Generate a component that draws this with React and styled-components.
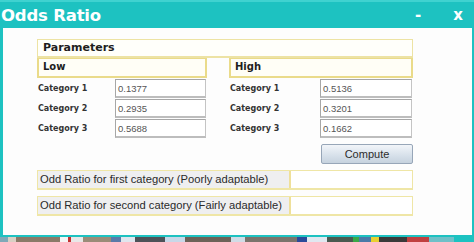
import React from "react";
import styled, { createGlobalStyle } from "styled-components";

const GlobalStyle = createGlobalStyle`
  html, body {
    margin: 0;
    padding: 0;
    background: #1dc2c1;
  }
  #root {
    width: 474px;
    height: 242px;
    overflow: hidden;
  }
`;

const low = [
  { label: "Category 1", value: "0.1377" },
  { label: "Category 2", value: "0.2935" },
  { label: "Category 3", value: "0.5688" },
];

const high = [
  { label: "Category 1", value: "0.5136" },
  { label: "Category 2", value: "0.3201" },
  { label: "Category 3", value: "0.1662" },
];

const results = [
  "Odd Ratio for first category (Poorly adaptable)",
  "Odd Ratio for second category (Fairly adaptable)",
];

const taskbar = [
  ["#7fa9b8", 8],
  ["#d8d0c4", 8],
  ["#8a7a68", 44],
  ["#f4f4f4", 8],
  ["#c23030", 3],
  ["#e8e8e8", 12],
  ["#9a8c78", 28],
  ["#5a7aa8", 10],
  ["#dfe6ee", 14],
  ["#4d5258", 30],
  ["#c8d8e8", 20],
  ["#6c6258", 46],
  ["#d0dce6", 14],
  ["#7a746c", 52],
  ["#2a4a9a", 10],
  ["#e0e8f0", 20],
  ["#4a5a50", 26],
  ["#3aa848", 6],
  ["#4a7aa8", 12],
  ["#e8d030", 8],
  ["#3a3a3a", 28],
  ["#c04040", 22],
  ["#70c0c8", 25],
];

const App = () => {
  return (
    <>
      <GlobalStyle />
      <Window>
        <TitleBar>
          <Title>Odds Ratio</Title>
          <TitleButtons>
            <TitleButton>-</TitleButton>
            <TitleButton>x</TitleButton>
          </TitleButtons>
        </TitleBar>
        <Body>
          <Content>
            <SectionHeader>Parameters</SectionHeader>
            <Columns>
              <Column $width={170} $inputLeft={78}>
                <GroupHeader>Low</GroupHeader>
                {low.map((r) => (
                  <Row key={r.label}>
                    <RowLabel>{r.label}</RowLabel>
                    <Field>{r.value}</Field>
                  </Row>
                ))}
              </Column>
              <Column $width={184} $inputLeft={91}>
                <GroupHeader>High</GroupHeader>
                {high.map((r) => (
                  <Row key={r.label}>
                    <RowLabel>{r.label}</RowLabel>
                    <Field>{r.value}</Field>
                  </Row>
                ))}
              </Column>
            </Columns>
            <Actions>
              <Button>Compute</Button>
            </Actions>
            {results.map((text) => (
              <ResultRow key={text}>
                <ResultLabel>{text}</ResultLabel>
                <ResultValue />
              </ResultRow>
            ))}
          </Content>
        </Body>
        <Taskbar>
          {taskbar.map(([c, w], i) => (
            <Chunk key={i} style={{ background: c, width: w }} />
          ))}
        </Taskbar>
      </Window>
    </>
  );
};

export default App;

const Window = styled.div`
  width: 474px;
  height: 242px;
  display: flex;
  flex-direction: column;
  background: #1dc2c1;
`;

const TitleBar = styled.div`
  height: 28px;
  display: flex;
  align-items: center;
  justify-content: space-between;
  padding: 0 11px 0 1px;
  box-sizing: border-box;
  background: #1dc2c1;
  border-top: 2px solid #3fd2d0;
`;

const Title = styled.div`
  font-family: "DejaVu Sans", Verdana, sans-serif;
  font-weight: bold;
  font-size: 16.5px;
  color: #ffffff;
  letter-spacing: -0.2px;
`;

const TitleButtons = styled.div`
  display: flex;
  gap: 32px;
  align-items: center;
`;

const TitleButton = styled.div`
  font-family: "DejaVu Sans", Verdana, sans-serif;
  font-weight: bold;
  font-size: 15px;
  color: #ffffff;
`;

const Body = styled.div`
  height: 207px;
  margin: 0 2px 0 3px;
  background: #fdfdfd;
  padding: 11px 0 0 34px;
  box-sizing: border-box;
`;

const Content = styled.div`
  width: 376px;
  display: flex;
  flex-direction: column;
`;

const SectionHeader = styled.div`
  height: 19px;
  box-sizing: border-box;
  border: 1px solid #ede3a4;
  border-bottom: 2px solid #ede3a4;
  background: #fffffa;
  padding: 1px 0 0 5px;
  font-family: "DejaVu Sans", Verdana, sans-serif;
  font-weight: bold;
  font-size: 11px;
  color: #1e1e1e;
`;

const Columns = styled.div`
  display: flex;
  justify-content: space-between;
`;

const Column = styled.div`
  width: ${(p) => p.$width}px;
  display: flex;
  flex-direction: column;
  --input-left: ${(p) => p.$inputLeft}px;
`;

const GroupHeader = styled.div`
  height: 20px;
  box-sizing: border-box;
  border: 2px solid #eadb8a;
  border-top: 1px solid #eadb8a;
  background: #fffef6;
  padding: 2px 0 0 4px;
  font-family: "DejaVu Sans", Verdana, sans-serif;
  font-weight: bold;
  font-size: 10px;
  color: #1e1e1e;
`;

const Row = styled.div`
  height: 20px;
  display: flex;
  align-items: center;
`;

const RowLabel = styled.div`
  width: var(--input-left);
  padding-left: 1px;
  box-sizing: border-box;
  font-family: "DejaVu Sans", Verdana, sans-serif;
  font-weight: bold;
  font-size: 8px;
  color: #333333;
`;

const Field = styled.div`
  flex: 1;
  height: 19px;
  margin-right: 1px;
  box-sizing: border-box;
  border: 1px solid #a7a7a7;
  border-right-color: #c4c4c4;
  border-bottom: 2px solid #bdbdbd;
  background: #ffffff;
  padding: 3px 0 0 2px;
  font-family: "Liberation Sans", Arial, sans-serif;
  font-size: 9.5px;
  color: #555555;
`;

const Actions = styled.div`
  display: flex;
  justify-content: flex-end;
  padding-top: 6px;
`;

const Button = styled.div`
  width: 92px;
  height: 20px;
  box-sizing: border-box;
  border: 1px solid #97a6b8;
  border-radius: 2px;
  background: linear-gradient(#f2f5f9, #d6e0ea 60%, #c6d2de);
  display: flex;
  align-items: center;
  justify-content: center;
  font-family: "Liberation Sans", Arial, sans-serif;
  font-size: 11px;
  color: #2c2c2c;
`;

const ResultRow = styled.div`
  height: 20px;
  margin-top: 6px;
  display: flex;
  box-sizing: border-box;
  border: 1px solid #efe6a6;
  border-bottom: 2px solid #efe6a6;
`;

const ResultLabel = styled.div`
  width: 253px;
  background: #efeff0;
  border-right: 2px solid #efe09a;
  padding: 2px 0 0 2px;
  box-sizing: border-box;
  font-family: "Liberation Sans", Arial, sans-serif;
  font-size: 11.2px;
  color: #2a2a2a;
  white-space: nowrap;
`;

const ResultValue = styled.div`
  flex: 1;
  background: #ffffff;
`;

const Taskbar = styled.div`
  margin-top: 2px;
  height: 5px;
  display: flex;
  overflow: hidden;
`;

const Chunk = styled.div`
  height: 100%;
  flex-shrink: 0;
`;
